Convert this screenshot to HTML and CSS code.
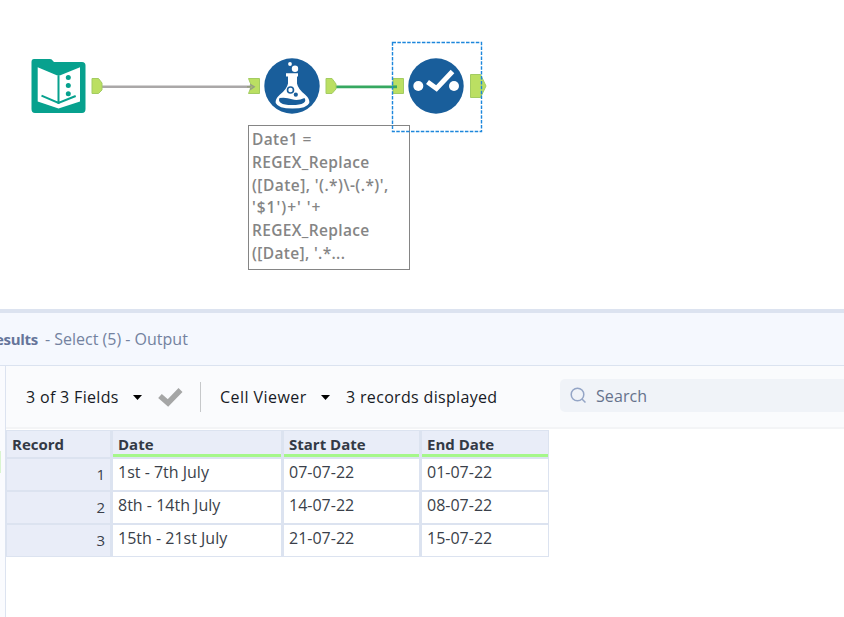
FILE: index.html
```html
<!DOCTYPE html>
<html lang="en">
<head>
<meta charset="utf-8">
<title>Workflow</title>
<link rel="stylesheet" href="styles.css">
</head>
<body>
<main class="canvas">
  <div class="note">Date1 =<br>REGEX_Replace<br><span class="l3">([Date], '(.*)\-(.*)',</span><br><span class="l4">'$1')+' '+</span><br>REGEX_Replace<br>([Date], '.*...</div>
  <svg class="wires" width="844" height="309" viewBox="0 0 844 309">
    <path d="M101 86.800H254" stroke="#aaa8a8" stroke-width="2.600"/>
    <path d="M335 86.800H399" stroke="#36a860" stroke-width="2.800"/>
    <g fill="#bbdf62" stroke="#a3cc62" stroke-width="1">
      <path d="M92 78.500H98.500L102 83V90L98.500 93.500H92Z"/>
      <path d="M248.500 78.500H259.500V93.500H248.500L251.500 86Z"/>
      <path d="M326 78.500H332L336 84V89L332 93.500H326Z"/>
      <path d="M393 78.500H403.500V93.500H393Z"/>
      <path d="M470.500 74.500H480.500L486 86L480.500 97.500H470.500Z"/>
    </g>
    <path d="M247 86.800H251M250 84.500L254 86.800L250 89.500" fill="none" stroke="#96a080" stroke-width="1.600"/>
    <path d="M392 86.800H397" stroke="#36a860" stroke-width="2.800"/>
  </svg>
  <svg class="node input" width="56" height="56" viewBox="30 58 56 56">
    <path d="M34 59H50Q52 59 53 61L54 62H82Q85.500 62 85.500 65.500V109Q85.500 113 82 113H35Q31.500 113 31.500 109V62Q31.500 59 34 59Z" fill="#07a18e"/>
    <path d="M37.700 67.300L58.500 76L80 67.300V101.500L58.500 108.500L37.700 101.500Z" fill="#fff"/>
    <path d="M58.500 76V104M41.500 95.700L58.500 103L75.700 96" fill="none" stroke="#07a18e" stroke-width="2"/>
    <g fill="#07a18e"><circle cx="68.300" cy="77.500" r="2.500"/><circle cx="68.300" cy="85.500" r="2.500"/><circle cx="68.300" cy="93.700" r="2.500"/></g>
  </svg>
  <svg class="node formula" width="56" height="56" viewBox="264 58 56 56">
    <circle cx="292" cy="86" r="27.700" fill="#195e9b"/>
    <path d="M286 73.300H298V76.500H297V83.500Q298 89 305 94.500Q310 99 309.300 103Q307 108.500 292.500 108.500Q278 108.500 275.700 103Q275 99 280 94.500Q287 89 288 83.500V76.500H286Z" fill="#fff"/>
    <path d="M279.500 98Q286 97 292 99.300Q298 101 304.500 98Q306.500 101 303.500 103Q300 105 292 105Q284 105 281 103Q278 101 279.500 98Z" fill="#195e9b"/>
    <circle cx="290.500" cy="90" r="3" fill="#fff" stroke="#195e9b" stroke-width="1.600"/><circle cx="295.800" cy="94.700" r="2.100" fill="#195e9b"/>
    <circle cx="290" cy="64" r="1.900" fill="#fff"/><circle cx="295" cy="68.700" r="3.200" fill="#fff"/>
  </svg>
  <svg class="node select" width="56" height="56" viewBox="408 58 56 56">
    <circle cx="436" cy="86" r="27.700" fill="#195e9b"/>
    <circle cx="418.300" cy="86" r="5" fill="#fff"/><circle cx="454" cy="86" r="5" fill="#fff"/>
    <path d="M427.500 82L436.500 88.500L452.500 71.500" fill="none" stroke="#fff" stroke-width="5"/>
  </svg>
  <svg class="selection" width="92" height="92" viewBox="0 0 92 92"><rect x="1.500" y="1.500" width="89" height="89" fill="none" stroke="#1d87dc" stroke-width="1.400" stroke-dasharray="3.500 1.400"/></svg>
</main>
<section class="results">
  <header class="title"><b>esults</b><span>- Select (5) - Output</span></header>
  <div class="body">
    <aside class="gutter"><i></i></aside>
    <div class="content">
      <div class="toolbar">
        <span class="fields">3 of 3 Fields</span>
        <svg class="caret" width="9" height="5" viewBox="0 0 9 5"><path d="M0 0H9L4.500 5Z"/></svg>
        <svg class="check" width="26" height="20" viewBox="0 0 26 20"><path d="M3 9L11 16L23.500 3" fill="none" stroke="#a5a6a6" stroke-width="5.500"/></svg>
        <i class="divider"></i>
        <span class="viewer">Cell Viewer</span>
        <svg class="caret" width="9" height="5" viewBox="0 0 9 5"><path d="M0 0H9L4.500 5Z"/></svg>
        <span class="count">3 records displayed</span>
        <div class="search">
          <svg width="17" height="17" viewBox="0 0 17 17" fill="none" stroke="#94a5c6" stroke-width="1.500"><circle cx="7.500" cy="7.500" r="6.300"/><path d="M12 12L15.500 15.500"/></svg>
          <span>Search</span>
        </div>
      </div>
      <div class="table">
        <div class="th">Record</div><div class="th data">Date</div><div class="th data">Start Date</div><div class="th data">End Date</div>
        <div class="num">1</div><div>1st - 7th July</div><div>07-07-22</div><div>01-07-22</div>
        <div class="num">2</div><div>8th - 14th July</div><div>14-07-22</div><div>08-07-22</div>
        <div class="num">3</div><div>15th - 21st July</div><div>21-07-22</div><div>15-07-22</div>
      </div>
    </div>
  </div>
</section>
</body>
</html>
```
FILE: styles.css
```css
* { box-sizing: border-box; }
body { margin: 0; width: 844px; height: 617px; overflow: hidden; background: #fff; font-family: "Open Sans", "Noto Sans", sans-serif; display: flex; flex-direction: column; }
svg { display: block; flex: none; }
.canvas { position: relative; height: 309px; flex: none; }
.wires, .node, .selection, .note { position: absolute; }
.wires { left: 0; top: 0; }
.input { left: 30px; top: 58px; }
.formula { left: 264px; top: 58px; }
.select { left: 408px; top: 58px; }
.selection { left: 391px; top: 41px; }
.note { left: 248px; top: 125px; width: 162px; height: 145px; border: 1px solid #858585; padding: 2px 0 0 3px; font-size: 15.500px; font-weight: 600; line-height: 22.800px; letter-spacing: .35px; color: #858585; white-space: nowrap; }
.l3 { letter-spacing: .45px; }
.l4 { letter-spacing: 1px; }
.results { flex: 1; display: flex; flex-direction: column; border-top: 4px solid #dce3f0; }
.title { height: 53px; flex: none; display: flex; align-items: center; gap: 7px; background: #f5f8fe; border-bottom: 1px solid #dbe3f0; color: #73829f; font-size: 16px; white-space: nowrap; }
.title b { margin-left: -5px; font-size: 15px; letter-spacing: -.3px; font-weight: 700; color: #65759a; }
.body { flex: 1; display: flex; }
.gutter { width: 6px; flex: none; background: #fafbfe; border-right: 1px solid #dce3f0; padding-top: 85px; }
.gutter i { display: block; width: 1px; height: 22px; background: #d9f5d0; }
.content { flex: 1; min-width: 0; }
.toolbar { height: 63px; display: flex; align-items: center; padding-left: 20px; background: #fafbfd; border-bottom: 2px solid #f3f4f6; font-size: 16px; letter-spacing: .33px; color: #171a25; white-space: nowrap; }
.caret { margin-top: 2px; }
.fields { width: 107px; }
.check { margin-left: 15px; }
.divider { width: 1px; height: 30px; background: #c6c8ca; margin: 0 19px 0 17px; }
.viewer { width: 101px; letter-spacing: .45px; }
.count { margin-left: 16px; width: 214px; }
.search { flex: 1; height: 33px; margin-top: -2px; display: flex; align-items: center; padding-left: 10px; gap: 9px; border-radius: 5px 0 0 5px; background: #f0f3f8; color: #66728c; letter-spacing: .1px; }
.table { margin-top: 1px; width: 543px; height: 127px; padding: 1px; background: #dce3f0; display: grid; grid-template-columns: 103px 168px 135px 126px; grid-template-rows: 26px 31px 31px 31px; gap: 2px 3px; font-size: 16px; color: #3a3f4a; }
.table > div { background: #fff; padding-left: 5px; line-height: 27px; white-space: nowrap; }
.table > .th { background: #e9edf8; font-size: 15px; font-weight: 700; line-height: 26px; color: #333945; }
.table > .data { border-bottom: 3px solid #a5f78a; }
.table > .num { background: #e9edf8; text-align: right; padding-right: 5px; font-size: 15px; line-height: 30px; }
```
